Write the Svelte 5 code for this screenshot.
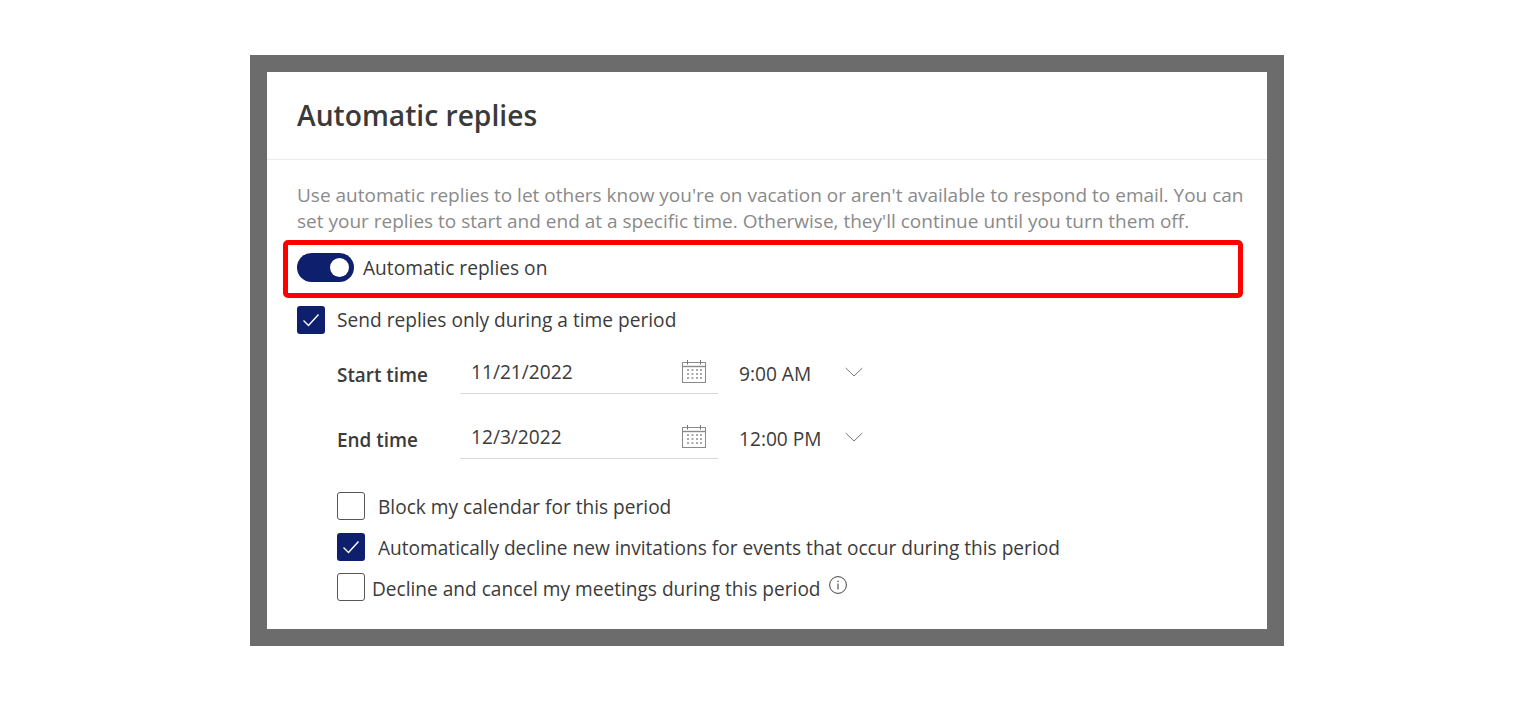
<script>
	const times = [
		{ label: 'Start time', date: '11/21/2022', time: '9:00 AM' },
		{ label: 'End time', date: '12/3/2022', time: '12:00 PM' }
	];
</script>

{#snippet check()}
	<svg viewBox="0 0 28 28" width="28" height="28" aria-hidden="true">
		<path d="M6.5 14.5 L11.5 19.5 L21.5 8.5" fill="none" stroke="#fff" stroke-width="1.4" />
	</svg>
{/snippet}

{#snippet calendar()}
	<svg class="cal" viewBox="0 0 24 23" width="24" height="23" aria-hidden="true">
		<rect x="0.5" y="2.5" width="23" height="20" fill="none" stroke="#8a8a8a" />
		<path d="M0.5 6.5 H23.5" stroke="#8a8a8a" stroke-width="1.4" />
		<path d="M5.5 0 V4.5 M18.5 0 V4.5" stroke="#777" />
		<path
			d="M5 10 h2 M9.5 10 h2 M14 10 h2 M18 10 h2 M5 14 h2 M9.5 14 h2 M14 14 h2 M18 14 h2 M5 18 h2 M9.5 18 h2 M14 18 h2 M18 18 h2"
			stroke="#8f8f8f"
			stroke-width="1.6"
		/>
	</svg>
{/snippet}

<main class="page">
	<section class="frame">
		<header class="head">
			<h1>Automatic replies</h1>
		</header>

		<div class="body">
			<p class="intro">
				Use automatic replies to let others know you're on vacation or aren't available to respond to email. You can<br />
				set your replies to start and end at a specific time. Otherwise, they'll continue until you turn them off.
			</p>

			<div class="toggle-row">
				<span class="toggle"><span class="knob"></span></span>
				<span>Automatic replies on</span>
				<!-- Annotation drawn over the screenshot, not part of the form. -->
				<span class="callout" aria-hidden="true"></span>
			</div>

			<div class="check-row period">
				<span class="box on">{@render check()}</span>
				<span>Send replies only during a time period</span>
			</div>

			<div class="times">
				{#each times as t}
					<div class="time-row">
						<span class="time-label">{t.label}</span>
						<div class="date">
							<span class="date-text">{t.date}</span>
							{@render calendar()}
						</div>
						<span class="time">{t.time}</span>
						<svg class="chev" viewBox="0 0 18 10" width="18" height="10" aria-hidden="true">
							<path d="M0.7 1 L9 9 L17.3 1" fill="none" stroke="#777" stroke-width="1" />
						</svg>
					</div>
				{/each}
			</div>

			<div class="options">
				<div class="check-row">
					<span class="box"></span>
					<span class="opt">Block my calendar for this period</span>
				</div>
				<div class="check-row">
					<span class="box on">{@render check()}</span>
					<span class="opt">Automatically decline new invitations for events that occur during this period</span>
				</div>
				<div class="check-row tight">
					<span class="box"></span>
					<span class="opt low">Decline and cancel my meetings during this period</span>
					<svg class="info" viewBox="0 0 18 18" width="18" height="18" aria-hidden="true">
						<circle cx="9" cy="9" r="8.4" fill="none" stroke="#444" stroke-width="1" />
						<path d="M9 7.6 V13.4" stroke="#444" stroke-width="1.1" />
						<circle cx="9" cy="5.2" r="0.8" fill="#444" />
					</svg>
				</div>
			</div>
		</div>
	</section>
</main>

<style>
	:global(body) {
		background: #fff;
	}

	.page {
		display: flex;
		justify-content: center;
		height: 701px;
		padding-top: 55px;
		box-sizing: border-box;
		font-family: 'Open Sans', 'Noto Sans', sans-serif;
		font-size: 19.15px;
		color: #3b3b3b;
	}

	.frame {
		width: 1000px;
		height: 557px;
		border: 17px solid #6c6c6c;
		background: #fff;
	}

	.head {
		height: 87px;
		padding-left: 30px;
		display: flex;
		align-items: center;
		border-bottom: 1px solid #ececec;
	}

	h1 {
		margin: -2px 0 0;
		font-size: 28.2px;
		font-weight: 600;
		color: #3a3a3a;
	}

	.body {
		padding: 22px 30px 0;
	}

	.intro {
		margin: 0;
		font-size: 19px;
		line-height: 26px;
		color: #8a8a8a;
		white-space: nowrap;
	}

	.toggle-row {
		position: relative;
		display: flex;
		align-items: center;
		gap: 9px;
		margin-top: 19px;
		height: 29px;
	}

	.toggle {
		display: flex;
		align-items: center;
		justify-content: flex-end;
		width: 57px;
		height: 29px;
		padding-right: 5px;
		box-sizing: border-box;
		border-radius: 15px;
		background: #0e1f6e;
	}

	.knob {
		width: 19px;
		height: 19px;
		border-radius: 50%;
		background: #fff;
	}

	.callout {
		position: absolute;
		left: -14px;
		top: -13px;
		width: 960px;
		height: 58px;
		box-sizing: border-box;
		border: 5px solid #fe0000;
		border-radius: 5px;
	}

	.check-row {
		display: flex;
		align-items: center;
		gap: 13px;
		height: 28px;
	}

	.period {
		gap: 12px;
		margin-top: 24px;
	}

	.tight {
		gap: 7px;
	}

	.box {
		flex: none;
		display: block;
		width: 28px;
		height: 28px;
		box-sizing: border-box;
		border: 1px solid #555;
		border-radius: 3px;
		background: #fff;
	}

	.box.on {
		border: 0;
		background: #0e1f6e;
	}

	.box svg {
		display: block;
	}

	.times {
		display: flex;
		flex-direction: column;
		gap: 23px;
		margin-top: 18px;
		padding-left: 40px;
	}

	.time-row {
		display: flex;
		align-items: center;
		height: 42px;
	}

	.time-label {
		width: 123px;
		font-size: 18.9px;
		font-weight: 600;
		padding-top: 4px;
	}

	.date {
		display: flex;
		align-items: center;
		justify-content: space-between;
		width: 258px;
		height: 42px;
		box-sizing: border-box;
		padding: 0 12px 0 11px;
		border-bottom: 1px solid #d9d9d9;
	}

	.date-text {
		margin-top: -2px;
	}

	.cal {
		margin-top: -3px;
	}

	.time {
		width: 106px;
		margin-left: 21px;
		padding-top: 2px;
	}

	.chev {
		margin-top: -3px;
	}

	.options {
		display: flex;
		flex-direction: column;
		gap: 12.5px;
		margin-top: 33px;
		padding-left: 40px;
		font-size: 19.1px;
	}

	.opt {
		padding-top: 2px;
	}

	.opt.low {
		padding-top: 4px;
	}

	.info {
		margin: -5px 0 0 1px;
	}
</style>
